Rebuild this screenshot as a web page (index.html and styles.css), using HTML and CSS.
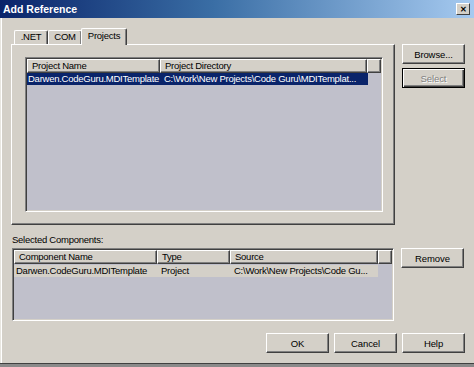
FILE: index.html
```html
<!DOCTYPE html>
<html lang="en">
<head>
    <meta charset="UTF-8">
    <title>Add Reference</title>
    <link rel="stylesheet" href="styles.css">
</head>
<body>
    <div class="window">
        <div class="titlebar">
            <span class="title">Add Reference</span>
            <span class="close">&#x2715;</span>
        </div>

        <div class="client">
            <!-- tabs + project list -->
            <div class="top">
                <div class="main">
                    <div class="tabs">
                        <div class="tab tab-net">.NET</div>
                        <div class="tab tab-com">COM</div>
                        <div class="tab tab-projects active">Projects</div>
                    </div>
                    <div class="panel">
                        <div class="list list-projects">
                            <div class="list-head">
                                <div class="col p-name">Project Name</div>
                                <div class="col p-dir">Project Directory</div>
                                <div class="col fill"></div>
                            </div>
                            <div class="row selected">
                                <span class="cell p-name">Darwen.CodeGuru.MDITemplate</span>
                                <span class="cell p-dir">C:\Work\New Projects\Code Guru\MDITemplat...</span>
                            </div>
                        </div>
                    </div>
                </div>
                <div class="side side-top">
                    <button class="btn">Browse...</button>
                    <button class="btn btn-default" disabled>Select</button>
                </div>
            </div>

            <!-- selected components -->
            <div class="label">Selected Components:</div>
            <div class="middle">
                <div class="list list-selected">
                    <div class="list-head">
                        <div class="col s-name">Component Name</div>
                        <div class="col s-type">Type</div>
                        <div class="col s-src">Source</div>
                        <div class="col fill"></div>
                    </div>
                    <div class="row inactive">
                        <span class="cell s-name">Darwen.CodeGuru.MDITemplate</span>
                        <span class="cell s-type">Project</span>
                        <span class="cell s-src">C:\Work\New Projects\Code Gu...</span>
                    </div>
                </div>
                <div class="side">
                    <button class="btn">Remove</button>
                </div>
            </div>

            <div class="footer">
                <button class="btn">OK</button>
                <button class="btn">Cancel</button>
                <button class="btn">Help</button>
            </div>
        </div>
    </div>
</body>
</html>
```

FILE: styles.css
```css
* {
    margin: 0;
    padding: 0;
    box-sizing: border-box;
}
body {
    font-family: "Liberation Sans", Arial, sans-serif;
    font-size: 9.5px;
    letter-spacing: -0.25px;
    color: #000;
    background: #8a8a8a;
    width: 474px;
    height: 367px;
    overflow: hidden;
}
.window {
    width: 474px;
    height: 364px;
    background: #d4d0c8;
    box-shadow: inset 1px 0 #e8e6e0, inset 2px 0 #fff;
    border-bottom: 1px solid #404040;
}
.titlebar {
    height: 18px;
    background: linear-gradient(to right, #0a246a, #3a6ea5 45%, #a6caf0);
    color: #fff;
    display: flex;
    align-items: center;
    justify-content: space-between;
    padding: 0 4px 0 3px;
}
.title {
    font-weight: bold;
    font-size: 10.5px;
    letter-spacing: 0;
}
.close {
    width: 14px;
    height: 12px;
    background: #d4d0c8;
    color: #000;
    font-size: 8px;
    font-weight: bold;
    line-height: 11px;
    text-align: center;
    border: 1px solid;
    border-color: #fff #404040 #404040 #fff;
}
.client {
    padding: 10px 9px 0 11px;
}
.top,
.middle {
    display: flex;
    gap: 7px;
}
.main {
    width: 384px;
}

/* tabs */
.tabs {
    display: flex;
    align-items: flex-end;
    height: 16px;
    padding-left: 3px;
}
.tab {
    height: 14px;
    line-height: 12px;
    text-align: center;
    background: #d4d0c8;
    border-top: 1px solid #fff;
    border-left: 1px solid #fff;
    border-right: 1px solid #404040;
    box-shadow: inset -1px 0 #808080;
    border-radius: 2px 2px 0 0;
}
.tab-net { width: 34px; }
.tab-com { width: 34px; }
.tab-projects { width: 46px; }
.tab.active {
    height: 17px;
    line-height: 14px;
    margin: 0 -2px -1px -1px;
    position: relative;
    z-index: 1;
}
.panel {
    height: 181px;
    border: 1px solid;
    border-color: #fff #404040 #404040 #fff;
    box-shadow: inset -1px -1px #808080;
    padding: 12px 11px 11px 13px;
}

/* list views */
.list {
    background: #c0c0cb;
    border: 1px solid;
    border-color: #808080 #fff #fff #808080;
    box-shadow: inset 1px 1px #404040, inset -1px -1px #d4d0c8;
    padding: 1px;
    overflow: hidden;
}
.list-projects {
    width: 358px;
    height: 155px;
}
.list-selected {
    width: 382px;
    height: 73px;
    margin-left: 1px;
}
.list-head {
    display: flex;
    height: 14px;
}
.col {
    flex: none;
    background: #d4d0c8;
    border: 1px solid;
    border-color: #fff #404040 #404040 #fff;
    box-shadow: inset -1px -1px #808080;
    padding-left: 4px;
    line-height: 11px;
    white-space: nowrap;
}
.col.fill {
    flex: 1;
}
.row {
    display: inline-flex;
    height: 12px;
    line-height: 12px;
    white-space: nowrap;
}
.row.selected {
    background: #0a246a;
    color: #fff;
}
.row.inactive {
    background: #d4d0c8;
    margin-top: 1px;
}
.cell {
    flex: none;
    padding-left: 4px;
    overflow: hidden;
}
.p-name { width: 133px; }
.p-dir { width: 207px; }
.row .p-name { padding-left: 1px; }
.row .p-dir { width: 208px; }
.s-name { width: 143px; }
.s-type { width: 73px; }
.s-src { width: 148px; }
.row .s-name { padding-left: 2px; }

/* buttons */
.side {
    display: flex;
    flex-direction: column;
    gap: 4px;
    width: 63px;
}
.side-top {
    margin-top: 16px;
}
.btn {
    width: 63px;
    height: 20px;
    background: #d4d0c8;
    border: 1px solid;
    border-color: #fff #404040 #404040 #fff;
    box-shadow: inset -1px -1px #808080;
    font-family: "Liberation Sans", Arial, sans-serif;
    font-size: 9.5px;
    letter-spacing: -0.1px;
    color: #000;
}
.btn-default {
    border-color: #000;
    box-shadow: inset 1px 1px #fff, inset -1px -1px #404040, inset -2px -2px #808080;
}
.btn:disabled {
    color: #808080;
    text-shadow: 1px 1px #fff;
}
.label {
    margin: 9px 0 2px 1px;
    line-height: 12px;
}
.footer {
    display: flex;
    justify-content: flex-end;
    gap: 5px;
    margin-top: 12px;
}
```
